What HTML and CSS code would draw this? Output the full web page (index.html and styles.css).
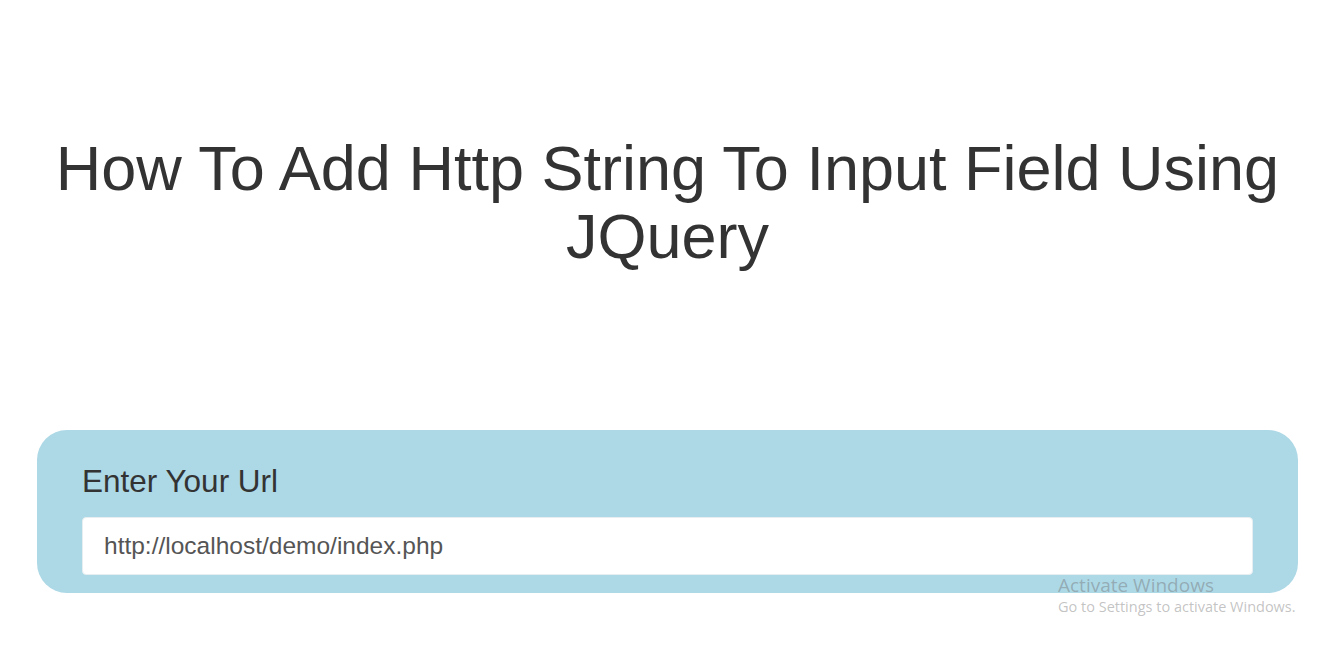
FILE: index.html
```html
<!DOCTYPE html>
<html lang="en">
<head>
<meta charset="utf-8">
<title>How To Add Http String To Input Field Using JQuery</title>
<link rel="stylesheet" href="styles.css">
</head>
<body>
  <div class="page">
    <h1 class="title">How To Add Http String To Input Field Using JQuery</h1>
    <div class="panel">
      <label class="panel-label" for="url">Enter Your Url</label>
      <input class="url-input" id="url" type="text" value="http://localhost/demo/index.php">
    </div>
  </div>
  <div class="watermark">
    <div class="watermark-title">Activate Windows</div>
    <div class="watermark-sub">Go to Settings to activate Windows.</div>
  </div>
</body>
</html>
```

FILE: styles.css
```css
html, body {
  margin: 0;
  padding: 0;
  background: #ffffff;
}

body {
  font-family: "Liberation Sans", Arial, sans-serif;
  color: #333333;
}

.page {
  width: 1261px;
  margin-left: 37px;
  padding-top: 134px;
}

.title {
  margin: 0;
  font-size: 63px;
  font-weight: 400;
  line-height: 68px;
  text-align: center;
  color: #333333;
}

.panel {
  margin-top: 160px;
  background: #add8e6;
  border-radius: 30px;
  padding: 34px 45px 18px 45px;
  display: flex;
  flex-direction: column;
}

.panel-label {
  font-size: 31.5px;
  line-height: 35px;
  color: #333333;
  margin-bottom: 18px;
}

.url-input {
  box-sizing: border-box;
  height: 58px;
  width: 100%;
  border: 1px solid #e6eef1;
  border-radius: 4px;
  background: #ffffff;
  padding: 0 21px;
  font-family: "Liberation Sans", Arial, sans-serif;
  font-size: 24.5px;
  color: #555555;
  outline: none;
}

.watermark {
  position: absolute;
  left: 1058px;
  top: 574px;
  font-family: "Open Sans", "Noto Sans", sans-serif;
  color: rgba(110, 110, 110, 0.42);
  pointer-events: none;
}

.watermark-title {
  font-size: 19px;
  line-height: 23px;
}

.watermark-sub {
  font-size: 14.5px;
  line-height: 19px;
}
```
